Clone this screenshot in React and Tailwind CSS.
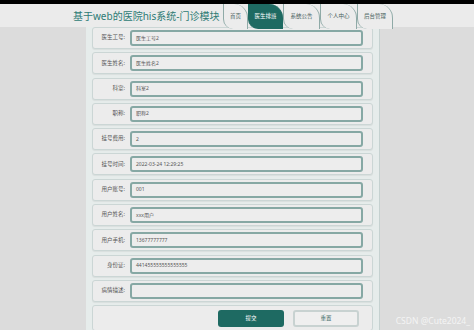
import React from "react";

const rows = [
  ["医生工号:", "医生工号2"],
  ["医生姓名:", "医生姓名2"],
  ["科室:", "科室2"],
  ["职称:", "职称2"],
  ["挂号费用:", "2"],
  ["挂号时间:", "2022-03-24 12:29:25"],
  ["用户账号:", "001"],
  ["用户姓名:", "xxx用户"],
  ["用户手机:", "13677777777"],
  ["身份证:", "441455555555555555"],
  ["病情描述:", ""],
];

const tabs = [
  { name: "首页", w: "w-[25px]" },
  { name: "医生排班", w: "w-[35px]", active: true },
  { name: "系统公告", w: "w-[37px]" },
  { name: "个人中心", w: "w-[37px]" },
  { name: "后台管理", w: "w-[36px]" },
];

export default function App() {
  return (
    <div
      className="w-[474px] h-[330px] overflow-hidden bg-[#dcdcdc] relative"
      style={{ fontFamily: '"Noto Sans", "Noto Sans CJK SC", sans-serif' }}
    >
      <div className="h-[4px] bg-black" />
      <div className="h-[23px] bg-[#ebebeb] flex items-stretch relative z-10">
        <div className="w-[73px]" />
        <div className="text-[10px] leading-none whitespace-nowrap text-[#2e7b75] self-center pt-[1px] w-[150px]">
          基于web的医院his系统-门诊模块
        </div>
        <div className="flex items-stretch h-[25px]">
          {tabs.map((t) => (
            <div
              key={t.name}
              className={`${t.w} flex items-center justify-center text-[5.5px] leading-none rounded-tr-[14px] rounded-bl-[10px] border-r border-l ${
                t.active
                  ? "bg-[#1e6a62] text-white border-[#1e6a62]"
                  : "bg-[#ececec] text-[#4a5f5d] border-[#8faaa7]"
              }`}
            >
              {t.name}
            </div>
          ))}
        </div>
      </div>
      <div className="flex">
        <div className="w-[86px]" />
        <div className="w-[294px] h-[303px] bg-[#e6eceb] px-[6px] border-r border-[#c5d1d0] flex flex-col gap-[3.3px]">
          {rows.map(([label, value]) => (
            <div
              key={label}
              className="h-[22px] shrink-0 flex items-center rounded-[3px] border border-[#cbd6d5] bg-[#ececec] shadow-[0_1px_1px_rgba(0,0,0,0.06)]"
            >
              <div className="w-[32px] text-right text-[5.5px] text-[#555] leading-none">
                {label}
              </div>
              <div className="ml-[5px] w-[233px] h-[16px] rounded-[3px] border-2 border-[#86a8a4] bg-[#ededed] flex items-center px-[4px] text-[5px] text-[#555] leading-none">
                {value}
              </div>
            </div>
          ))}
          <div className="h-[26px] shrink-0 flex items-center justify-end gap-[9px] pr-[13px] rounded-[3px] border border-[#cbd6d5] bg-[#ececec]">
            <div className="w-[66px] h-[17px] rounded-[3px] bg-[#1e6a62] text-white text-[5.5px] flex items-center justify-center">
              提交
            </div>
            <div className="w-[66px] h-[17px] rounded-[3px] bg-[#efefef] border-2 border-[#c8d2d1] text-[#3c6a66] text-[5.5px] flex items-center justify-center">
              重置
            </div>
          </div>
        </div>
      </div>
      <div className="absolute right-[4px] bottom-[5px] text-[8.5px] text-[#f4f4f4] leading-none">
        CSDN @Cute2024_
      </div>
    </div>
  );
}
